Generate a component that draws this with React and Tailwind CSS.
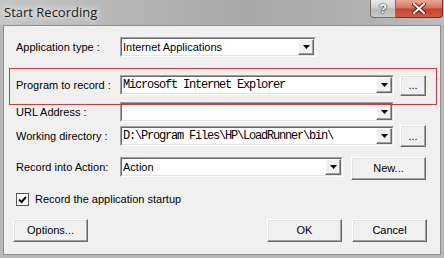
import React from 'react';

const sans = { fontFamily: '"Liberation Sans", Arial, sans-serif' };

function DropArrow() {
  return (
    <div className="flex h-full w-[16px] shrink-0 items-center justify-center border border-t-white border-l-white border-r-[#696969] border-b-[#696969] bg-[#f0f0f0] shadow-[inset_-1px_-1px_0_#a0a0a0]">
      <svg width="7" height="4" viewBox="0 0 7 4">
        <polygon points="0,0 7,0 3.5,4" fill="#000" />
      </svg>
    </div>
  );
}

function Combo({ width, text, mono }) {
  return (
    <div className={`${width} h-[20px] shrink-0 border border-t-[#a0a0a0] border-l-[#a0a0a0] border-r-white border-b-white`}>
      <div className="flex h-full border border-t-[#696969] border-l-[#696969] border-r-[#e3e3e3] border-b-[#e3e3e3] bg-white">
        <div
          className={`flex-1 overflow-hidden whitespace-nowrap pl-[1px] ${mono ? 'text-[12px] tracking-[-1.2px] leading-[16px]' : 'text-[11px] leading-[16px]'}`}
          style={mono ? { fontFamily: '"Liberation Mono", "Courier New", monospace' } : sans}
        >
          {text}
        </div>
        <DropArrow />
      </div>
    </div>
  );
}

function Btn({ className, children }) {
  return (
    <button
      className={`${className} block shrink-0 border border-t-white border-l-white border-r-[#696969] border-b-[#696969] bg-[#f0f0f0] shadow-[inset_-1px_-1px_0_#a0a0a0,inset_1px_1px_0_#e3e3e3] text-[11px] leading-none text-black`}
      style={sans}
    >
      {children}
    </button>
  );
}

function Label({ children }) {
  return (
    <div className="w-[104px] shrink-0 text-[11px] text-black whitespace-nowrap" style={sans}>
      {children}
    </div>
  );
}

export default function App() {
  return (
    <div className="relative h-[258px] w-[444px] overflow-hidden bg-[#b8b8b8]">
      {/* title bar */}
      <div className="flex h-[25px] items-start justify-between bg-[linear-gradient(90deg,#c6c6c6_0%,#b7b7b7_25%,#a7a7a7_55%,#b0b0b0_80%,#bdbdbd_100%)]">
        <div
          className="pl-[4px] pt-[3px] text-[13px] text-[#1a1a1a] [text-shadow:0_0_6px_#fff,0_0_10px_rgba(255,255,255,0.8)]"
          style={{ fontFamily: '"Open Sans", "Noto Sans", sans-serif' }}
        >
          Start Recording
        </div>
        <div className="mr-[1px] flex">
          <div className="flex h-[18px] w-[26px] items-center justify-center rounded-bl-[4px] border border-t-0 border-[#6f6f6f] bg-[linear-gradient(180deg,#e9e9e9_0%,#cfcfcf_45%,#b9b9b9_55%,#c8c8c8_100%)]">
            <span className="text-[13px] font-bold leading-none text-white [text-shadow:0_0_1px_#333,0_0_1px_#333,0_0_2px_#555]" style={sans}>?</span>
          </div>
          <div className="flex h-[18px] w-[47px] items-center justify-center rounded-br-[4px] border border-l-0 border-t-0 border-[#7a2a20] bg-[linear-gradient(180deg,#eaa99a_0%,#d8735f_45%,#c7432f_55%,#d25a44_100%)]">
            <svg width="14" height="11" viewBox="0 0 14 11">
              <path d="M2 1 L12 10 M12 1 L2 10" stroke="#5a1b12" strokeWidth="4" strokeLinecap="square" />
              <path d="M2 1 L12 10 M12 1 L2 10" stroke="#fff" strokeWidth="2" strokeLinecap="square" />
            </svg>
          </div>
        </div>
      </div>

      {/* client area */}
      <div className="mx-[3px] h-[230px] border border-[#8f8f8f] bg-[#f0f0f0]">
        <div className="mt-[11px] flex h-[20px] items-center pl-[12px]">
          <Label>Application type :</Label>
          <Combo width="w-[196px]" text="Internet Applications" />
        </div>

        <div className="mt-[18px] flex h-[20px] items-center pl-[12px]">
          <Label>Program to record :</Label>
          <Combo width="w-[274px]" text="Microsoft Internet Explorer" mono />
          <Btn className="ml-[6px] h-[21px] w-[26px]">...</Btn>
        </div>

        <div className="mt-[7px] flex h-[20px] items-center pl-[12px]">
          <Label>URL Address :</Label>
          <Combo width="w-[274px]" text="" />
        </div>

        <div className="mt-[4px] flex h-[20px] items-center pl-[12px]">
          <Label>Working directory :</Label>
          <Combo width="w-[274px]" text="D:\Program Files\HP\LoadRunner\bin\" mono />
          <Btn className="ml-[6px] h-[22px] w-[26px]">...</Btn>
        </div>

        <div className="mt-[11px] flex h-[23px] items-start pl-[12px]">
          <div className="flex h-[20px] items-center">
            <Label>Record into Action:</Label>
          </div>
          <Combo width="w-[223px]" text="Action" />
          <Btn className="ml-[8px] h-[23px] w-[75px]">New...</Btn>
        </div>

        <div className="mt-[13px] flex h-[13px] items-center pl-[12px]">
          <div className="flex h-[13px] w-[13px] items-center justify-center border border-[#555] bg-white">
            <svg width="9" height="8" viewBox="0 0 9 8">
              <path d="M1 3.5 L3.5 6 L8 1" stroke="#000" strokeWidth="2" fill="none" />
            </svg>
          </div>
          <span className="ml-[6px] text-[11px] text-black" style={sans}>Record the application startup</span>
        </div>

        <div className="mt-[13px] flex h-[23px] pl-[9px] pr-[13px]">
          <Btn className="h-[23px] w-[75px]">Options...</Btn>
          <div className="flex-1" />
          <Btn className="h-[23px] w-[75px]">OK</Btn>
          <Btn className="ml-[10px] h-[23px] w-[75px]">Cancel</Btn>
        </div>
      </div>

      {/* red annotation box */}
      <div className="pointer-events-none absolute left-[9px] top-[68px] h-[37px] w-[428px] border border-[#d6393b]" />
    </div>
  );
}
